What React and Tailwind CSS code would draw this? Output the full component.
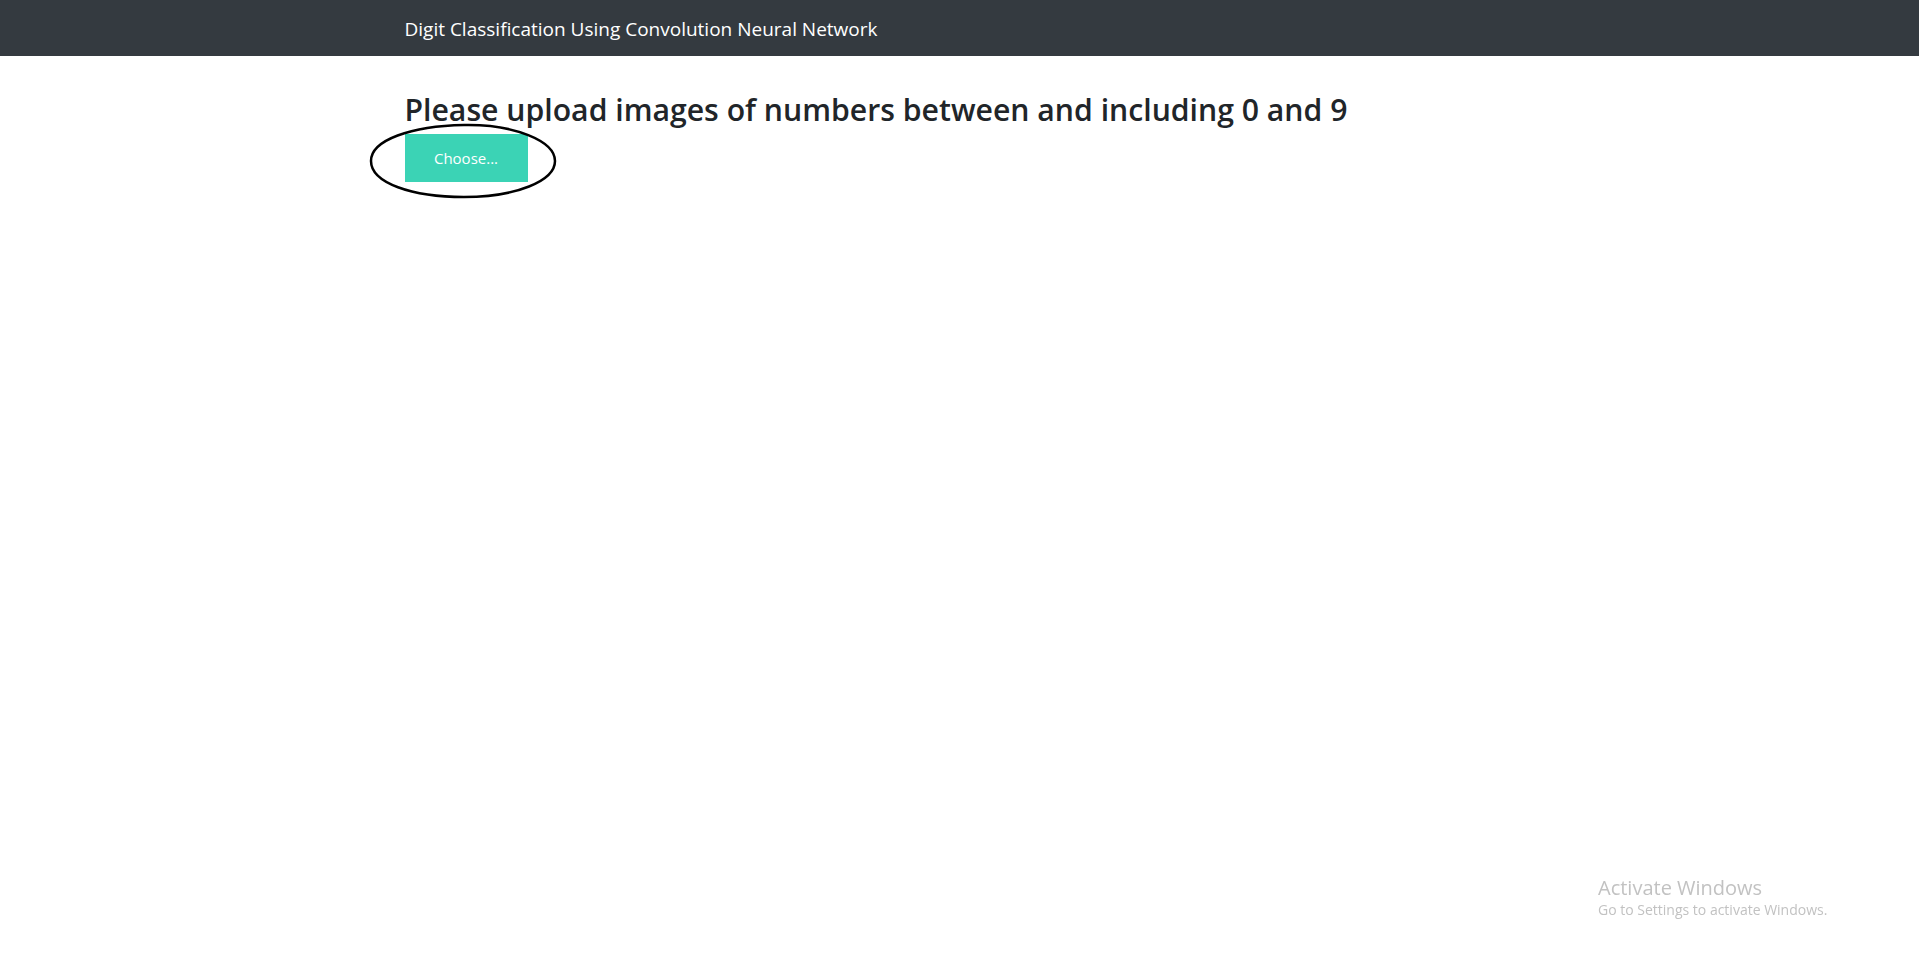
import React from 'react';

const Navbar = () => (
  <nav className="h-[56px] bg-[#343a40] flex items-center">
    <div className="w-full max-w-[1140px] mx-auto px-[15px] pt-[3px]">
      <span className="text-white text-[19px] leading-none">
        Digit Classification Using Convolution Neural Network
      </span>
    </div>
  </nav>
);

const App = () => {
  return (
    <div className="relative min-h-[969px] bg-white font-['Open_Sans',sans-serif]">
      <Navbar />
      <main className="w-full max-w-[1140px] mx-auto px-[15px] pt-[35px]">
        <h2 className="text-[30.2px] leading-[38px] font-semibold text-[#212529] mb-[5px]">
          Please upload images of numbers between and including 0 and 9
        </h2>
        <div className="relative inline-block">
          <button className="w-[123px] h-[48px] bg-[#3bd3b5] text-white text-[15px]">
            Choose...
          </button>
          {/* pen annotation round the button */}
          <svg
            className="absolute left-[-37px] top-[-11px] pointer-events-none"
            width="190"
            height="76"
            viewBox="0 0 190 76"
          >
            <path
              d="M96 2 C146 1 187 18 187 38 C187 58 148 74 96 74 C44 74 3 60 3 38 C3 17 43 3 96 2 Z"
              fill="none"
              stroke="#000"
              strokeWidth="2.5"
            />
          </svg>
        </div>
      </main>

      <div className="fixed left-[1598px] bottom-[49px] text-[#c2c2c2]">
        <div className="text-[20px] leading-[24px]">Activate Windows</div>
        <div className="text-[14px] leading-[20px]">Go to Settings to activate Windows.</div>
      </div>
    </div>
  );
};

export default App;
